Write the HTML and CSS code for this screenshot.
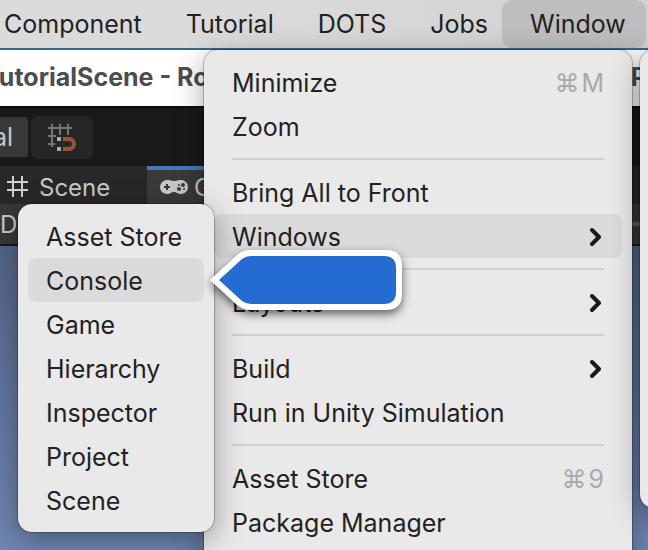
FILE: index.html
```
<!DOCTYPE html>
<html lang="en">
<head>
    <meta charset="UTF-8">
    <meta name="viewport" content="width=device-width, initial-scale=1.0">
    <title>Window Menu</title>
    <link rel="stylesheet" href="styles.css">
</head>

<body>
    <!-- Menu bar -->
    <nav class="menubar">
        <button type="button">Component</button>
        <button type="button">Tutorial</button>
        <button type="button">DOTS</button>
        <button type="button">Jobs</button>
        <button type="button" class="open">Window</button>
    </nav>

    <!-- Editor window -->
    <main class="editor">
        <header class="titlebar">
            <span class="scene-name">TutorialScene - Ro</span>
            <span>P</span>
        </header>

        <div class="toolbar">
            <button type="button" class="pivot">Global</button>
            <button type="button" class="snap" aria-label="Grid snapping">
                <svg width="28" height="28" viewBox="0 0 28 28">
                    <path d="M0 5h24M4 1v23M12 1v11M20 1v11M0 13h8M0 21h7" fill="none" stroke="#777" stroke-width="2"/>
                    <path d="M9 14h4v4h-4zM9 24h4v4h-4z" fill="#aaa"/>
                    <path d="M15 16h6a5 5 0 0 1 0 10h-6" fill="none" stroke="#9b5039" stroke-width="4"/>
                </svg>
            </button>
        </div>

        <div class="tabs">
            <button type="button" class="tab">
                <svg width="22" height="22" viewBox="0 0 22 22">
                    <path d="M0 6h21M0 14h21M6 0v21M15 0v21" fill="none" stroke="#d0d0d0" stroke-width="2"/>
                </svg>
                Scene
            </button>
            <button type="button" class="tab active">
                <svg width="28" height="14" viewBox="0 0 28 14">
                    <path d="M7 0C11 0 11 1 14 1S17 0 21 0a7 7 0 0 1 0 14C17 14 17 12 14 12S11 14 7 14A7 7 0 0 1 7 0z" fill="#c8c8c8"/>
                    <path d="M4 7h6M7 4v6" stroke="#383838" stroke-width="2"/>
                    <circle cx="23" cy="5" r="2" fill="#383838"/>
                    <circle cx="19" cy="9" r="2" fill="#383838"/>
                    <circle cx="24" cy="9" r="1" fill="#383838"/>
                    <circle cx="19" cy="5" r="1" fill="#383838"/>
                </svg>
                Game
            </button>
        </div>

        <div class="view-bar">
            <span>Display 1</span>
            <div class="scale-track"></div>
        </div>
        <div class="viewport"></div>
    </main>

    <!-- Window menu -->
    <div class="menu window-menu">
        <button type="button" class="item">Minimize <span class="shortcut"><span>⌘</span>M</span></button>
        <button type="button" class="item">Zoom</button>
        <hr>
        <button type="button" class="item">Bring All to Front</button>
        <button type="button" class="item selected">Windows
            <svg class="chevron" width="12" height="20" viewBox="0 0 12 20"><path d="M2 3l7 7-7 7"/></svg>
        </button>
        <hr>
        <button type="button" class="item">Layouts
            <svg class="chevron" width="12" height="20" viewBox="0 0 12 20"><path d="M2 3l7 7-7 7"/></svg>
        </button>
        <hr>
        <button type="button" class="item">Build
            <svg class="chevron" width="12" height="20" viewBox="0 0 12 20"><path d="M2 3l7 7-7 7"/></svg>
        </button>
        <button type="button" class="item">Run in Unity Simulation</button>
        <hr>
        <button type="button" class="item">Asset Store <span class="shortcut"><span>⌘</span>9</span></button>
        <button type="button" class="item">Package Manager</button>
    </div>

    <div class="menu side-menu"></div>

    <!-- Windows submenu -->
    <div class="menu submenu">
        <button type="button" class="item">Asset Store</button>
        <button type="button" class="item selected">Console</button>
        <button type="button" class="item">Game</button>
        <button type="button" class="item">Hierarchy</button>
        <button type="button" class="item">Inspector</button>
        <button type="button" class="item">Project</button>
        <button type="button" class="item">Scene</button>
    </div>

    <!-- Callout arrow pointing at Console -->
    <svg class="callout" width="192" height="60" viewBox="0 0 192 60">
        <path d="M0 30L27 5Q33 0 40 0H176Q192 0 192 16V44Q192 60 176 60H40Q33 60 27 55Z" fill="#fff"/>
        <path d="M9 30L32 9Q36 6 41 6H174Q186 6 186 18V42Q186 54 174 54H41Q36 54 32 51Z" fill="#246bd2"/>
    </svg>
</body>
</html>
```

FILE: styles.css
```
/* General Reset */
* {
    margin: 0;
    padding: 0;
    box-sizing: border-box;
}

body {
    display: flex;
    flex-direction: column;
    height: 100vh;
    overflow: hidden;
    position: relative;
    font-family: Inter, "Liberation Sans", sans-serif;
    font-size: 25px;
    color: #222;
}

button {
    border: none;
    background: none;
    font: inherit;
    color: inherit;
    white-space: nowrap;
}

/* Menu bar */
.menubar {
    display: flex;
    height: 50px;
    padding-left: 4px;
    gap: 44px;
    overflow: hidden;
    background: linear-gradient(to right, #dbdbdb 30%, #d2d2d2);
    border-bottom: 2px solid #32688f;
}

.menubar .open {
    margin-left: -30px;
    padding: 0 20px 0 28px;
    background: #bebebe;
    border-radius: 10px;
}

/* Editor window */
.editor {
    flex: 1;
    display: flex;
    flex-direction: column;
}

.titlebar {
    display: flex;
    justify-content: space-between;
    height: 56px;
    padding-right: 1px;
    background: #fff;
    color: #4d4d4d;
    font-weight: bold;
    line-height: 54px;
}

.scene-name {
    margin-left: -16px;
}

.toolbar {
    display: flex;
    align-items: center;
    gap: 3px;
    height: 60px;
    background: #191919;
    border-top: 2px solid #0c0c0c;
}

.pivot {
    display: flex;
    justify-content: flex-end;
    align-items: center;
    width: 28px;
    height: 40px;
    padding-right: 15px;
    overflow: hidden;
    background: #383838;
    color: #c8c8c8;
    border-radius: 0 4px 4px 0;
}

.snap {
    display: flex;
    justify-content: center;
    align-items: center;
    width: 62px;
    height: 43px;
    background: #262626;
    border-radius: 7px;
}

.tabs {
    display: flex;
    height: 38px;
    background: #282828;
    color: #c8c8c8;
    font-size: 24px;
}

.tab {
    display: flex;
    align-items: center;
    gap: 10px;
    width: 147px;
    padding: 4px 0 0 7px;
}

.tab.active {
    gap: 6px;
    padding: 0 0 0 13px;
    background: #3a3a3a;
    border-top: 4px solid #4479ba;
}

.view-bar {
    display: flex;
    align-items: center;
    justify-content: space-between;
    height: 42px;
    background: #383838;
    border-bottom: 2px solid #191919;
    color: #c8c8c8;
    font-size: 24px;
}

.scale-track {
    width: 60px;
    height: 4px;
    background: #5e5e5e;
}

.viewport {
    flex: 1;
    background: linear-gradient(#536486, #7087b4);
}

/* Menus */
.menu {
    position: absolute;
    padding: 10px;
    background: #e9e9e9;
    border-radius: 14px;
    box-shadow: 0 0 1px 1px rgba(0, 0, 0, 0.25), 0 8px 30px rgba(0, 0, 0, 0.35);
}

.window-menu {
    top: 50px;
    left: 204px;
    bottom: -40px;
    width: 428px;
}

.submenu {
    top: 204px;
    left: 18px;
    width: 196px;
}

.side-menu {
    top: 50px;
    left: 640px;
    right: -40px;
    height: 458px;
}

.item {
    display: flex;
    justify-content: space-between;
    align-items: center;
    width: 100%;
    height: 44px;
    padding: 3px 18px 1px;
    border-radius: 8px;
    text-align: left;
}

.item.selected {
    background: #dbdbdb;
}

.menu hr {
    margin: 10px 18px;
    border: none;
    border-top: 2px solid #cfcfcf;
}

.shortcut {
    display: flex;
    gap: 2px;
    color: #aaa;
}

.chevron {
    margin-right: 2px;
    fill: none;
    stroke: #1a1a1a;
    stroke-width: 4;
    stroke-linecap: round;
    stroke-linejoin: round;
}

/* Callout */
.callout {
    position: absolute;
    top: 250px;
    left: 210px;
    overflow: visible;
    filter: drop-shadow(0 4px 5px rgba(0, 0, 0, 0.6));
}
```
